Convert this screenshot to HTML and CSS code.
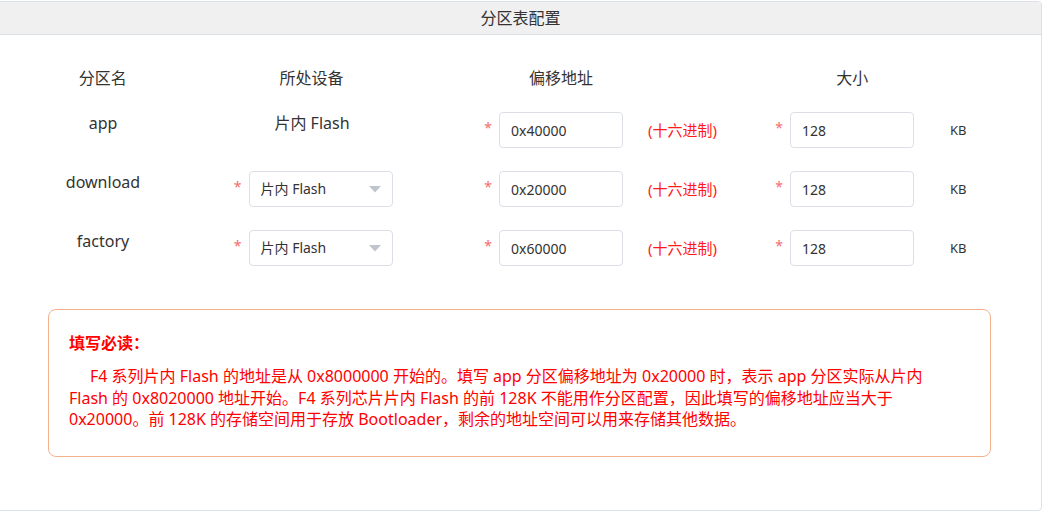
FILE: index.html
```html
<!DOCTYPE html>
<html lang="zh-CN">
<head>
  <meta charset="UTF-8">
  <title>分区表配置</title>
  <link rel="stylesheet" href="styles.css">
</head>
<body>
  <div class="panel">
    <div class="panel-header">分区表配置</div>
    <div class="panel-body">
      <div class="row head-row">
        <div class="col-name">分区名</div>
        <div class="col-dev">所处设备</div>
        <div class="col-off">偏移地址</div>
        <div class="col-size">大小</div>
      </div>

      <div class="row">
        <div class="col-name">app</div>
        <div class="col-dev">片内 Flash</div>
        <div class="field-off">
          <span class="req">*</span>
          <input class="inp" type="text" value="0x40000">
          <span class="hint">(十六进制)</span>
        </div>
        <div class="field-size">
          <span class="req">*</span>
          <input class="inp" type="text" value="128">
          <span class="unit">KB</span>
        </div>
      </div>

      <div class="row">
        <div class="col-name">download</div>
        <div class="col-dev dev-pick">
          <span class="req">*</span>
          <div class="select">
            <span>片内 Flash</span>
            <svg width="12" height="7" viewBox="0 0 12 7"><path d="M0 0h12L6 6.5z" fill="#c0c4cc"/></svg>
          </div>
        </div>
        <div class="field-off">
          <span class="req">*</span>
          <input class="inp" type="text" value="0x20000">
          <span class="hint">(十六进制)</span>
        </div>
        <div class="field-size">
          <span class="req">*</span>
          <input class="inp" type="text" value="128">
          <span class="unit">KB</span>
        </div>
      </div>

      <div class="row">
        <div class="col-name">factory</div>
        <div class="col-dev dev-pick">
          <span class="req">*</span>
          <div class="select">
            <span>片内 Flash</span>
            <svg width="12" height="7" viewBox="0 0 12 7"><path d="M0 0h12L6 6.5z" fill="#c0c4cc"/></svg>
          </div>
        </div>
        <div class="field-off">
          <span class="req">*</span>
          <input class="inp" type="text" value="0x60000">
          <span class="hint">(十六进制)</span>
        </div>
        <div class="field-size">
          <span class="req">*</span>
          <input class="inp" type="text" value="128">
          <span class="unit">KB</span>
        </div>
      </div>

      <div class="notice">
        <h4>填写必读：</h4>
        <p>F4 系列片内 Flash 的地址是从 0x8000000 开始的。填写 app 分区偏移地址为 0x20000 时，表示 app 分区实际从片内 Flash 的 0x8020000 地址开始。F4 系列芯片片内 Flash 的前 128K 不能用作分区配置，因此填写的偏移地址应当大于 0x20000。前 128K 的存储空间用于存放 Bootloader，剩余的地址空间可以用来存储其他数据。</p>
      </div>
    </div>
  </div>
</body>
</html>
```

FILE: styles.css
```css
body {
  margin: 0;
  padding: 1px 0 0;
  background-color: #FFFFFF;
  font-family: "Noto Sans", "Noto Sans CJK SC", sans-serif;
  color: #333333;
}

.panel {
  margin-left: -1px;
  width: 1041px;
  height: 508px;
  border: 1px solid #DCE1E7;
  border-radius: 0 4px 4px 0;
  background-color: #FFFFFF;
  overflow: hidden;
}

.panel-header {
  height: 32px;
  line-height: 32px;
  text-align: center;
  font-size: 16px;
  background-color: #F0F0F0;
  border-bottom: 1px solid #DCE1E7;
}

.panel-body {
  padding: 32px 0 0 41px;
}

.row {
  display: flex;
  align-items: flex-start;
  height: 36px;
  margin-bottom: 23px;
  font-size: 16px;
  line-height: 22px;
}

.row.head-row {
  height: 22px;
  margin-bottom: 23px;
}

.col-name {
  width: 124px;
  text-align: center;
}

.col-dev {
  width: 294px;
  text-align: center;
}

.col-off {
  width: 206px;
  text-align: center;
}

.col-size {
  width: 378px;
  text-align: center;
}

.dev-pick {
  display: flex;
  align-items: center;
  justify-content: center;
  height: 36px;
  padding-left: 2px;
  box-sizing: border-box;
}

.req {
  color: #F56C6C;
  font-size: 14px;
  width: 8px;
  margin-right: 7px;
  text-align: center;
  line-height: 1;
  position: relative;
  top: -2px;
}

.select {
  width: 144px;
  height: 36px;
  box-sizing: border-box;
  border: 1px solid #DCDFE6;
  border-radius: 4px;
  padding: 0 11px 0 11px;
  display: flex;
  align-items: center;
  justify-content: space-between;
  font-size: 14px;
  color: #333333;
}

.field-off,
.field-size {
  display: flex;
  align-items: center;
  height: 36px;
}

.field-off {
  padding-left: 25px;
}

.field-size {
  padding-left: 55px;
}

.inp {
  width: 124px;
  height: 36px;
  box-sizing: border-box;
  border: 1px solid #DCDFE6;
  border-radius: 4px;
  padding: 0 11px;
  font-family: inherit;
  font-size: 14px;
  color: #333333;
  outline: none;
}

.hint {
  width: 72px;
  margin-left: 25px;
  font-size: 15px;
  color: #FF1A1A;
  white-space: nowrap;
}

.unit {
  margin-left: 36px;
  font-size: 13px;
  color: #333333;
}

.notice {
  margin: 43px 0 0 7px;
  width: 943px;
  height: 148px;
  box-sizing: border-box;
  border: 1px solid #F3B28C;
  border-radius: 8px;
  padding: 22px 20px 0;
  color: #FF0000;
}

.notice h4 {
  margin: 0 0 12px;
  font-size: 16px;
  line-height: 22px;
  font-weight: bold;
}

.notice p {
  margin: 0;
  width: 860px;
  font-size: 16px;
  line-height: 21.5px;
  text-indent: 21px;
}
```
